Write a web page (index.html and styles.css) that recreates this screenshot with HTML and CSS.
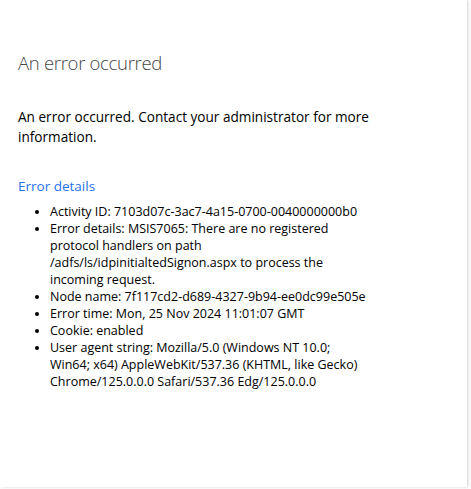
FILE: index.html
```html
<!DOCTYPE html>
<html>
<head>
<meta charset="utf-8">
<link rel="stylesheet" href="styles.css">
</head>
<body>
<div class="panel">
  <div class="content">
    <h1 class="title">An error occurred</h1>
    <p class="message">An error occurred. Contact your administrator for more information.</p>
    <div class="details">
      <a class="details-link" href="#">Error details</a>
      <ul class="details-list">
        <li>Activity ID: 7103d07c-3ac7-4a15-0700-0040000000b0</li>
        <li>Error details: MSIS7065: There are no registered protocol handlers on path /adfs/ls/idpinitialtedSignon.aspx to process the incoming request.</li>
        <li>Node name: 7f117cd2-d689-4327-9b94-ee0dc99e505e</li>
        <li>Error time: Mon, 25 Nov 2024 11:01:07 GMT</li>
        <li>Cookie: enabled</li>
        <li>User agent string: Mozilla/5.0 (Windows NT 10.0; Win64; x64) AppleWebKit/537.36 (KHTML, like Gecko) Chrome/125.0.0.0 Safari/537.36 Edg/125.0.0.0</li>
      </ul>
    </div>
  </div>
</div>
</body>
</html>
```

FILE: styles.css
```css
html, body {
  margin: 0;
  padding: 0;
  background: #fff;
}
body {
  font-family: "Open Sans", "Noto Sans", sans-serif;
  color: #000;
  width: 471px;
  height: 489px;
  overflow: hidden;
}
.panel {
  width: 467px;
  height: 487px;
  background: #fff;
  box-shadow: 1px 0 3px rgba(0, 0, 0, 0.18);
  box-sizing: border-box;
  padding: 50px 0 0 18px;
}
.content {
  width: 352px;
}
.title {
  margin: 0;
  font-size: 18.5px;
  letter-spacing: -0.3px;
  font-weight: 300;
  color: #444;
  line-height: 26px;
}
.message {
  margin: 31px 0 0 0;
  font-size: 13.6px;
  line-height: 20px;
}
.details {
  margin-top: 29px;
}
.details-link {
  display: block;
  font-size: 13.5px;
  color: #2672ec;
  text-decoration: none;
  line-height: 20px;
}
.details-list {
  margin: 7px 0 0 0;
  padding-left: 32px;
  font-size: 12.5px;
  line-height: 17px;
}
```
